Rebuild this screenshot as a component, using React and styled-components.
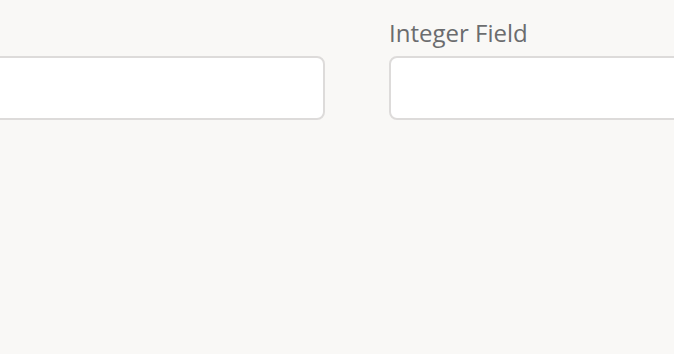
import styled, { createGlobalStyle } from "styled-components";

const GlobalStyle = createGlobalStyle`
  html, body {
    margin: 0;
    background: #f9f8f6;
    overflow: hidden;
  }
  body {
    font-family: "Open Sans", "Liberation Sans", sans-serif;
  }
`;

const Page = styled.div`
  width: 674px;
  height: 354px;
  padding-top: 16px;
  box-sizing: border-box;
  overflow: hidden;
`;

// Two equal columns; the left one runs off the left edge of the frame
const Row = styled.div`
  display: grid;
  grid-template-columns: 400px 400px;
  column-gap: 64px;
  margin-left: -75px;
`;

const Field = styled.div`
  display: flex;
  flex-direction: column;
`;

const Label = styled.label`
  font-size: 24px;
  line-height: 34px;
  color: #6b6c6e;
  margin-bottom: 6px;
  min-height: 34px;
`;

const Input = styled.input`
  height: 64px;
  box-sizing: border-box;
  border: 2px solid #dddbda;
  border-radius: 8px;
  background: #ffffff;
  padding: 0 24px;
  font: inherit;
  font-size: 26px;
  outline: none;
`;

export default function App() {
  const fields = [
    { id: "text", label: "" },
    { id: "integer", label: "Integer Field" },
  ];
  return (
    <>
      <GlobalStyle />
      <Page>
        <Row>
          {fields.map((f) => (
            <Field key={f.id}>
              <Label htmlFor={f.id}>{f.label}</Label>
              <Input id={f.id} type="text" />
            </Field>
          ))}
        </Row>
      </Page>
    </>
  );
}
